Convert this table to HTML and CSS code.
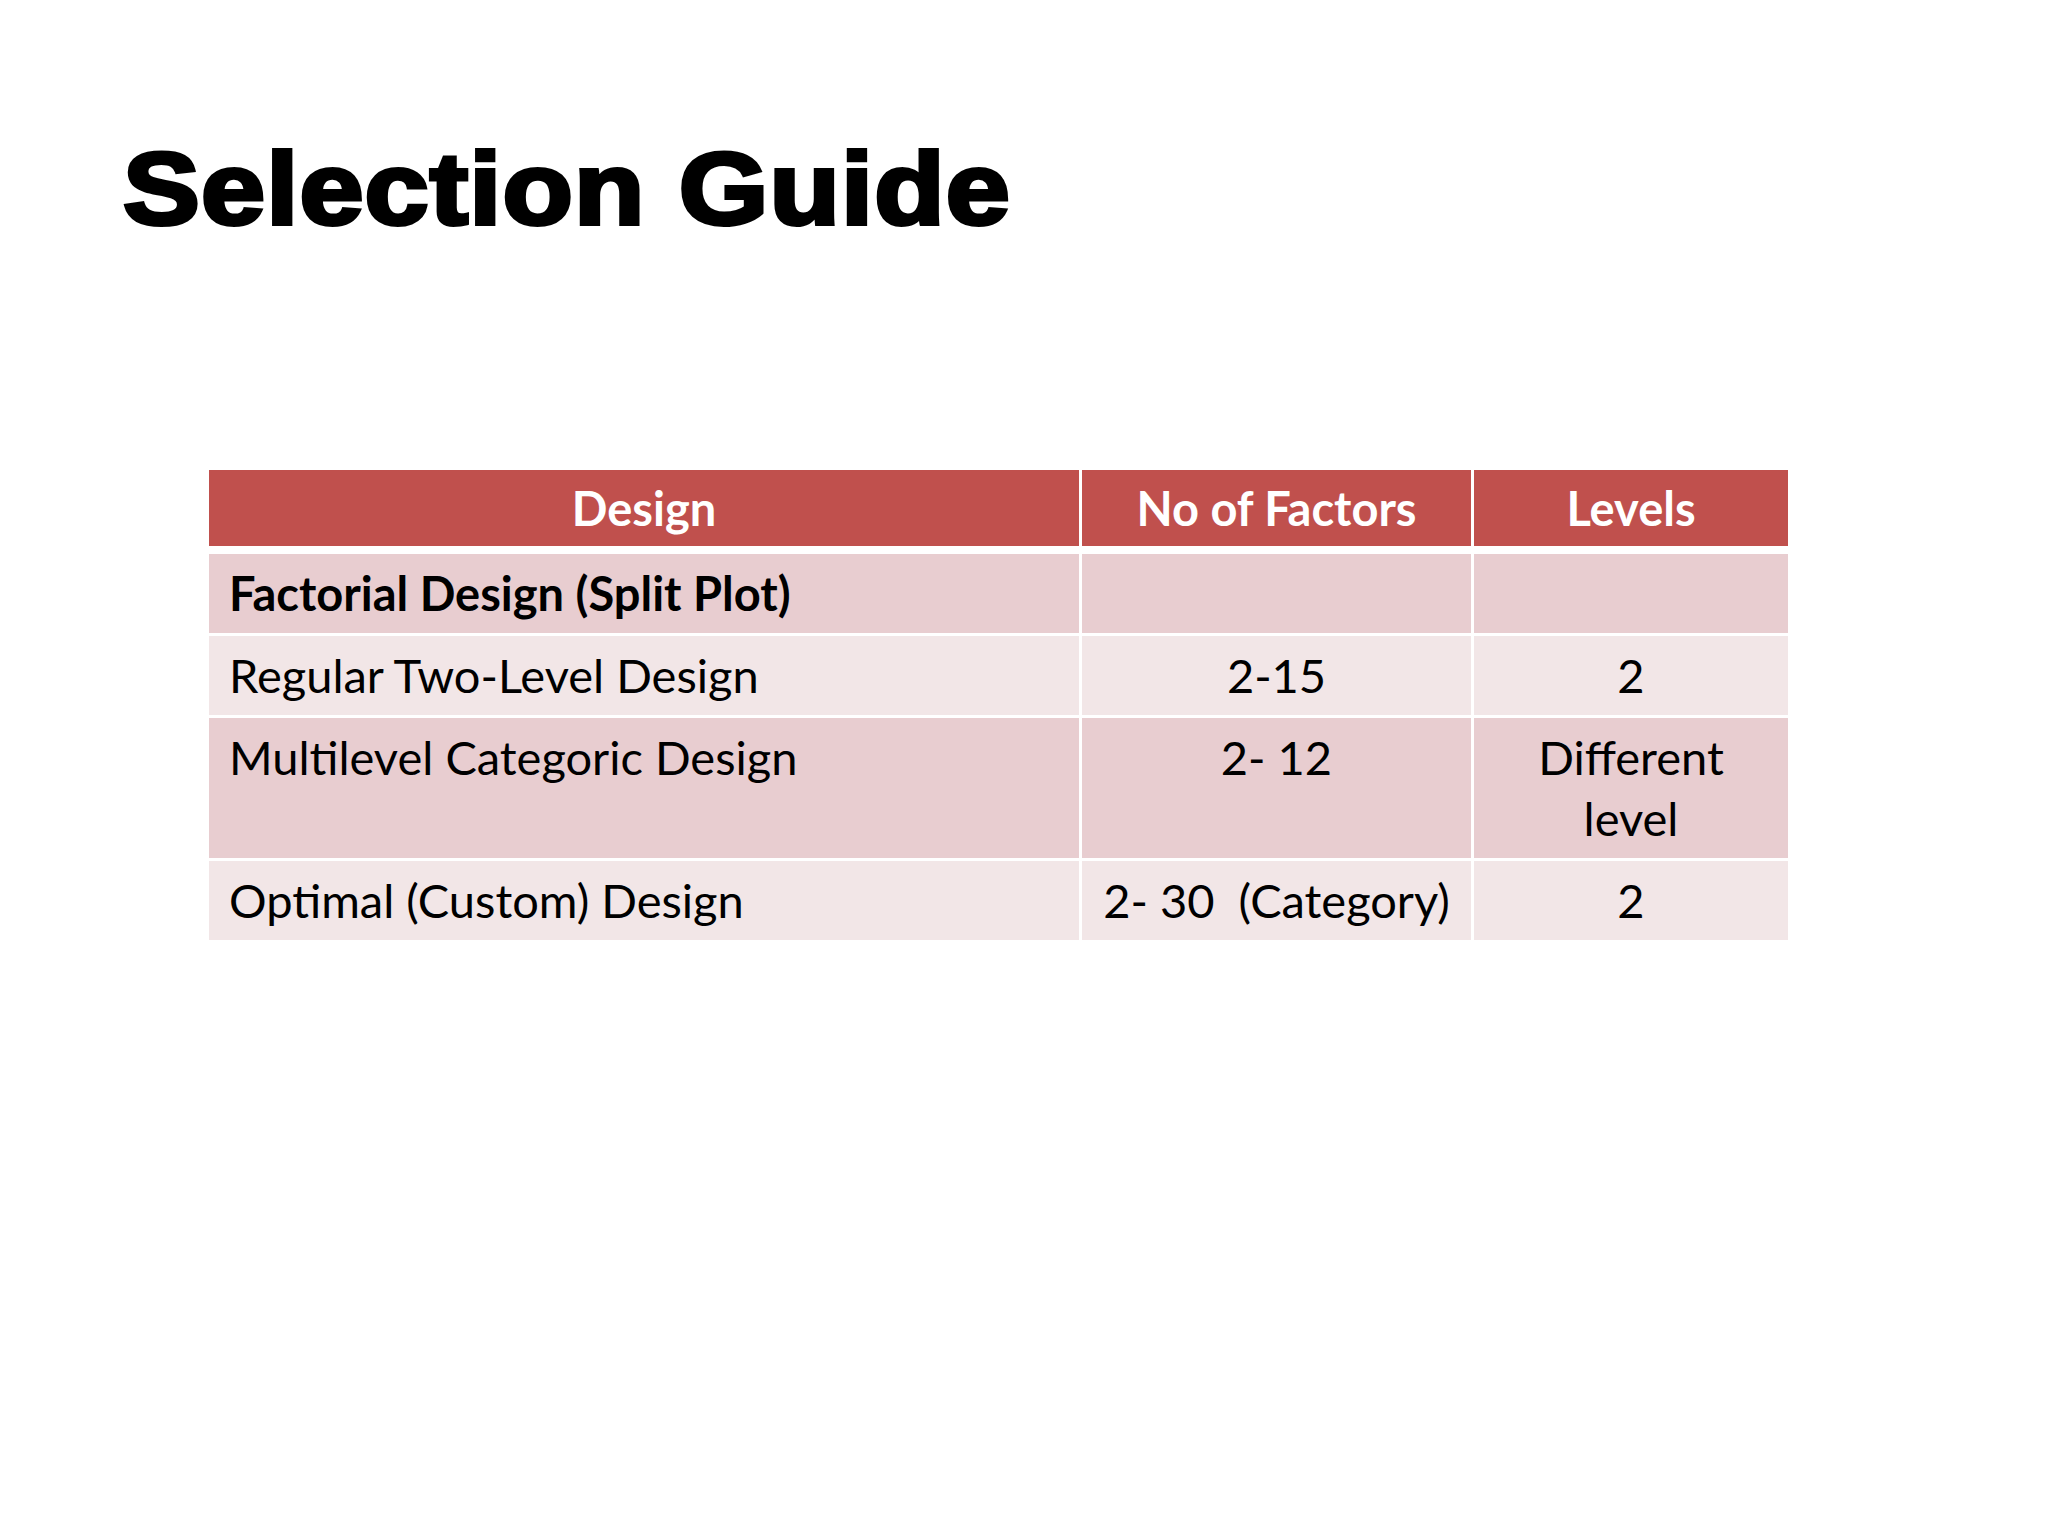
FILE: index.html
```html
<!DOCTYPE html>
<html>
<head>
<meta charset="utf-8">
<link rel="stylesheet" href="styles.css">
</head>
<body>
<div class="slide">
  <h1 class="title">Selection Guide</h1>
  <div class="table">
    <div class="row head">
      <div class="cell c">Design</div>
      <div class="cell c">No of Factors</div>
      <div class="cell c">Levels</div>
    </div>
    <div class="row odd">
      <div class="cell b">Factorial Design (Split Plot)</div>
      <div class="cell c"></div>
      <div class="cell c"></div>
    </div>
    <div class="row even">
      <div class="cell">Regular Two-Level Design</div>
      <div class="cell c">2-15</div>
      <div class="cell c">2</div>
    </div>
    <div class="row odd">
      <div class="cell">Multilevel Categoric Design</div>
      <div class="cell c">2- 12</div>
      <div class="cell c">Different<br>level</div>
    </div>
    <div class="row even">
      <div class="cell">Optimal (Custom) Design</div>
      <div class="cell c">2- 30&nbsp; (Category)</div>
      <div class="cell c">2</div>
    </div>
  </div>
</div>
</body>
</html>
```

FILE: styles.css
```css
html, body {
  margin: 0;
  padding: 0;
  background: #ffffff;
  overflow: hidden;
}
.slide {
  width: 2048px;
  height: 1536px;
  box-sizing: border-box;
  padding: 138px 0 0 0;
  display: flex;
  flex-direction: column;
  align-items: flex-start;
}
.title {
  margin: 0 0 0 123px;
  font-family: "Liberation Sans", Arial, sans-serif;
  font-weight: 700;
  font-size: 102px;
  line-height: 1;
  color: #000;
  -webkit-text-stroke: 4px #000;
  letter-spacing: 1px;
  white-space: nowrap;
  transform: scaleX(1.13);
  transform-origin: left top;
}
.table {
  margin: 230px 0 0 209px;
  width: 1579px;
  display: flex;
  flex-direction: column;
  gap: 3px;
  font-family: Lato, "Open Sans", sans-serif;
  font-size: 47px;
  color: #000;
}
.row {
  display: grid;
  grid-template-columns: 870px 389px 314px;
  column-gap: 3px;
}
.row.head {
  margin-bottom: 5px;
}
.cell {
  padding: 9px 20px;
  line-height: 61px;
  display: flex;
  flex-direction: column;
  justify-content: flex-start;
  white-space: nowrap;
}
.cell.c {
  text-align: center;
  align-items: center;
  padding-left: 0;
  padding-right: 0;
}
.head .cell {
  background: #c0504d;
  color: #ffffff;
  font-weight: 700;
  height: 76px;
  box-sizing: border-box;
  padding: 0 20px;
  justify-content: center;
}
.odd .cell {
  background: #e8cdd0;
}
.even .cell {
  background: #f2e6e7;
}
.cell.b {
  font-weight: 700;
}
```
